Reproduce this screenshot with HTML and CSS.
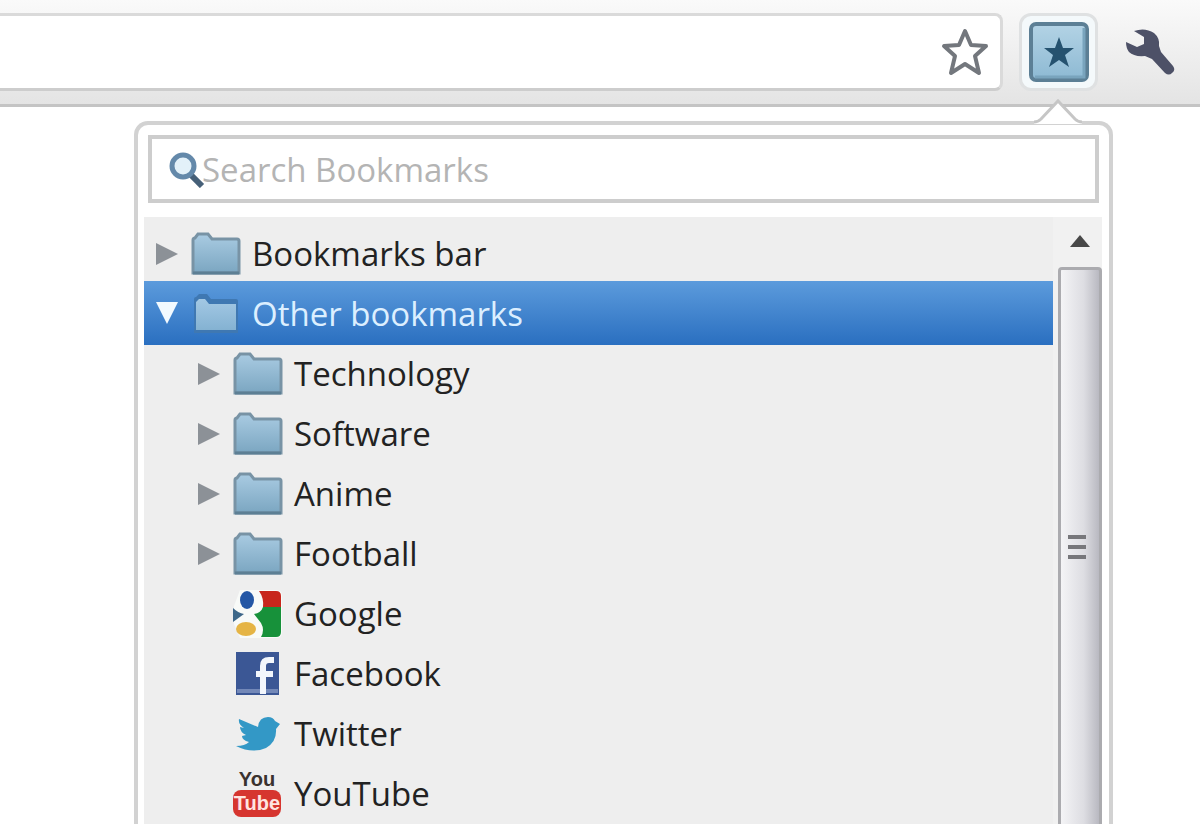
FILE: index.html
```html
<!DOCTYPE html>
<html lang="en">
<head>
<meta charset="UTF-8">
<meta name="viewport" content="width=device-width, initial-scale=1.0">
<title>Bookmarks</title>
<link rel="stylesheet" href="styles.css">
</head>
<body>

<!-- shared icons -->
<svg class="defs" width="0" height="0" aria-hidden="true">
  <defs>
    <linearGradient id="folderFill" x1="0" y1="0" x2="0" y2="1">
      <stop offset="0" stop-color="#a9cbe2"/>
      <stop offset="1" stop-color="#7ba6c1"/>
    </linearGradient>
    <linearGradient id="folderOpenFill" x1="0" y1="0" x2="0" y2="1">
      <stop offset="0" stop-color="#a3c8e4"/>
      <stop offset="1" stop-color="#84b2d2"/>
    </linearGradient>
  </defs>
  <symbol id="folder" viewBox="0 0 50 44">
    <path d="M2 42V9Q2 7 4 7L7 3H17L21 8H46Q48 8 48 10V42Z" fill="url(#folderFill)" stroke="#7893a5" stroke-width="3"/>
    <path d="M2 42H48" stroke="#5d7f94" stroke-width="3"/>
  </symbol>
  <symbol id="folderOpen" viewBox="0 0 50 44">
    <path d="M3 42V8Q3 6 5 6L8 3H16L20 8H45Q47 8 47 10V42Z" fill="#3f78b2"/>
    <path d="M5 39V11L8 8H14L18 13H45V39Z" fill="url(#folderOpenFill)"/>
  </symbol>
  <symbol id="arrow" viewBox="0 0 24 24">
    <path d="M1 2L23 13L1 24Z" fill="#8c9197"/>
  </symbol>
</svg>

<header class="toolbar">
  <div class="omnibox">
    <input type="text" aria-label="Address">
    <button class="star" title="Bookmark this page">
      <svg width="50" height="50" viewBox="0 0 50 50"><path d="M25 4L31 18L46 19L35 29L39 46L25 37L11 46L15 29L4 19L19 18Z" fill="#fff" stroke="#73777d" stroke-width="4" stroke-linejoin="round"/></svg>
    </button>
  </div>
  <button class="extension" title="Bookmarks">
    <svg width="60" height="60" viewBox="0 0 60 60">
      <defs><linearGradient id="extFill" x1="0" y1="0" x2="0" y2="1"><stop offset="0" stop-color="#b3d3e5"/><stop offset="1" stop-color="#8db9d3"/></linearGradient></defs>
      <rect x="2" y="2" width="56" height="56" rx="5" fill="url(#extFill)" stroke="#5c7f95" stroke-width="4"/>
      <path d="M55 6V55H6" fill="none" stroke="#79a4bd" stroke-width="3"/>
      <path d="M30 15L34 26H45L36 33L40 45L30 38L20 45L24 33L15 26H26Z" fill="#25526f"/>
    </svg>
  </button>
  <button class="wrench" title="Settings">
    <svg width="50" height="50" viewBox="0 0 50 50"><path d="M8 4Q19 0 28 6Q34 11 33 19L35 25L47 39Q50 43 46 46Q43 49 39 46L26 32L19 29Q8 30 3 25Q0 21 0 15L11 20L18 17L18 10Z" fill="#4d5167"/></svg>
  </button>
</header>

<main class="popup">
  <svg class="pointer" width="48" height="26" viewBox="0 0 48 26"><path d="M0 26V24L5 22L24 3L43 22L48 24V26Z" fill="#fff"/><path d="M0 24Q4 24 7 21L24 3L41 21Q44 24 48 24" fill="none" stroke="#c6c6c6" stroke-width="3"/></svg>

  <label class="search">
    <svg width="38" height="38" viewBox="0 0 38 38"><path d="M22 24L34 36" stroke="#466078" stroke-width="6"/><circle cx="15" cy="16" r="11" fill="#e3f1f9" stroke="#6489aa" stroke-width="5"/></svg>
    <input type="text" placeholder="Search Bookmarks" aria-label="Search Bookmarks">
  </label>

  <div class="content">
    <ul class="tree">
      <li>
        <button class="row"><svg class="arrow"><use href="#arrow"/></svg><svg class="icon"><use href="#folder"/></svg>Bookmarks bar</button>
      </li>
      <li>
        <button class="row selected"><svg class="arrow" viewBox="0 0 24 24"><path d="M1 1H23L12 23Z" fill="#f2faff"/></svg><svg class="icon"><use href="#folderOpen"/></svg>Other bookmarks</button>
        <ul class="children">
          <li><button class="row"><svg class="arrow"><use href="#arrow"/></svg><svg class="icon"><use href="#folder"/></svg>Technology</button></li>
          <li><button class="row"><svg class="arrow"><use href="#arrow"/></svg><svg class="icon"><use href="#folder"/></svg>Software</button></li>
          <li><button class="row"><svg class="arrow"><use href="#arrow"/></svg><svg class="icon"><use href="#folder"/></svg>Anime</button></li>
          <li><button class="row"><svg class="arrow"><use href="#arrow"/></svg><svg class="icon"><use href="#folder"/></svg>Football</button></li>
          <li>
            <a class="row link" href="#google">
              <svg class="favicon" viewBox="0 0 50 50">
                <path d="M8 2H44Q50 2 50 8V44Q50 50 44 50H8L2 36V18Z" fill="#f8faf8"/>
                <path d="M27 3H44Q49 3 49 8V19H31Q32 10 27 3Z" fill="#c8261c"/>
                <path d="M31 19H49V44Q49 49 44 49H29Q33 42 29 35L22 26Q29 25 31 19Z" fill="#17913a"/>
                <path d="M1 20Q6 25 12 26L1 34Z" fill="#3d6789"/>
                <ellipse cx="15" cy="12" rx="7" ry="9" fill="#2457a5"/>
                <ellipse cx="14" cy="41" rx="10" ry="7" fill="#e5b445"/>
              </svg>Google</a>
          </li>
          <li>
            <a class="row link" href="#facebook">
              <svg class="favicon" viewBox="0 0 50 50">
                <rect x="4" y="4" width="43" height="43" fill="#3b5795"/>
                <path d="M5 43H46" stroke="#7388b8" stroke-width="4"/>
                <path d="M42 12H37Q31 12 31 18V46M24 26H41" fill="none" stroke="#f2f6fc" stroke-width="6"/>
              </svg>Facebook</a>
          </li>
          <li>
            <a class="row link" href="#twitter">
              <svg class="favicon" viewBox="0 0 50 50"><path d="M7 11L26 19Q27 9 36 9Q41 9 43 13L48 16L44 21Q45 34 34 40Q20 46 4 38Q13 38 17 34Q10 32 10 28L14 27Q8 24 8 19L12 20Q6 16 7 11Z" fill="#3398c6"/></svg>Twitter</a>
          </li>
          <li>
            <a class="row link" href="#youtube">
              <svg class="favicon" viewBox="0 0 50 50">
                <text class="yt" x="25" y="18" fill="#39322f">You</text>
                <rect x="1" y="22" width="48" height="27" rx="8" fill="#d6352f"/>
                <text class="yt" x="25" y="42" fill="#ffe4e0">Tube</text>
              </svg>YouTube</a>
          </li>
        </ul>
      </li>
    </ul>
    <div class="scrollbar">
      <svg class="up" width="20" height="12" viewBox="0 0 20 12"><path d="M10 0L20 12H0Z" fill="#484848"/></svg>
      <div class="thumb"><i></i><i></i><i></i></div>
    </div>
  </div>
</main>

</body>
</html>
```
FILE: styles.css
```css
* { box-sizing: border-box; }
body { margin: 0; height: 100vh; overflow: hidden; display: flex; flex-direction: column; background: #fff; color: #222; font-family: "Open Sans", "Noto Sans", sans-serif; font-size: 33px; }
button { background: none; border: none; padding: 0; margin: 0; font: inherit; color: inherit; cursor: pointer; }
svg { display: block; flex: none; }
ul { list-style: none; margin: 0; padding: 0; }
.defs { position: absolute; }

/* toolbar */
.toolbar { flex: none; display: flex; align-items: flex-start; padding: 13px 24px 13px 0; background: linear-gradient(#fafafa, #e4e4e4); border-bottom: 3px solid #c4c4c4; }
.omnibox { flex: 1; display: flex; align-items: center; height: 78px; padding-right: 10px; background: #fff; border: 3px solid #dadada; border-left: none; border-bottom-color: #cdcdcd; border-radius: 0 8px 8px 0; }
.omnibox input { flex: 1; min-width: 0; height: 100%; border: none; outline: none; background: none; font: inherit; }
.extension { margin-left: 16px; width: 79px; height: 78px; display: flex; align-items: center; justify-content: center; background: #f4f9fb; border: 3px solid #dfe1e2; border-radius: 12px; }
.wrench { margin: 14px 0 0 28px; }

/* popup */
.popup { position: relative; flex: 1; min-height: 0; display: flex; flex-direction: column; margin: 14px 87px 0 134px; padding: 10px 7px 0 6px; border: 4px solid #d2d2d2; border-bottom: none; border-radius: 14px 14px 0 0; background: #fff; }
.pointer { position: absolute; top: -27px; right: 27px; }
.search { flex: none; display: flex; align-items: center; height: 68px; margin: 0 3px 14px 4px; padding-left: 16px; border: 4px solid #cdcdcd; background: #fff; }
.search input { flex: 1; min-width: 0; margin-left: -4px; padding: 0; border: none; outline: none; background: none; font: inherit; }
.search input::placeholder { color: #b4b4b4; opacity: 1; }
.content { flex: 1; min-height: 0; display: flex; background: #eee; }

/* tree */
.tree { flex: 1; min-width: 0; padding-top: 6px; overflow: hidden; }
.row { display: flex; align-items: center; width: 100%; height: 60px; padding-left: 11px; text-align: left; color: inherit; text-decoration: none; white-space: nowrap; }
.row.selected { height: 64px; margin: -2px 0; color: #dcefff; background: linear-gradient(#5c9bdc, #2a6fc0); }
.children .row { padding-left: 53px; }
.children .link { padding-left: 88px; }
.arrow { width: 24px; height: 24px; margin-right: 12px; }
.icon { width: 50px; height: 44px; margin-right: 11px; }
.favicon { width: 50px; height: 50px; margin-right: 12px; }
.yt { font-size: 20px; font-weight: 700; font-family: "Liberation Sans", sans-serif; text-anchor: middle; }

/* scrollbar */
.scrollbar { flex: none; width: 49px; padding-left: 5px; display: flex; flex-direction: column; align-items: center; background: #f1f1f1; }
.up { margin: 18px 0 20px; }
.thumb { flex: 1; align-self: stretch; display: flex; flex-direction: column; align-items: center; justify-content: center; gap: 6px; padding-right: 6px; border: 3px solid #ababaf; border-bottom: none; border-radius: 4px 4px 0 0; background: linear-gradient(90deg, #f4f4f6, #dddde2 60%, #b9b9c1); }
.thumb i { width: 18px; height: 4px; background: #77777b; }
```
